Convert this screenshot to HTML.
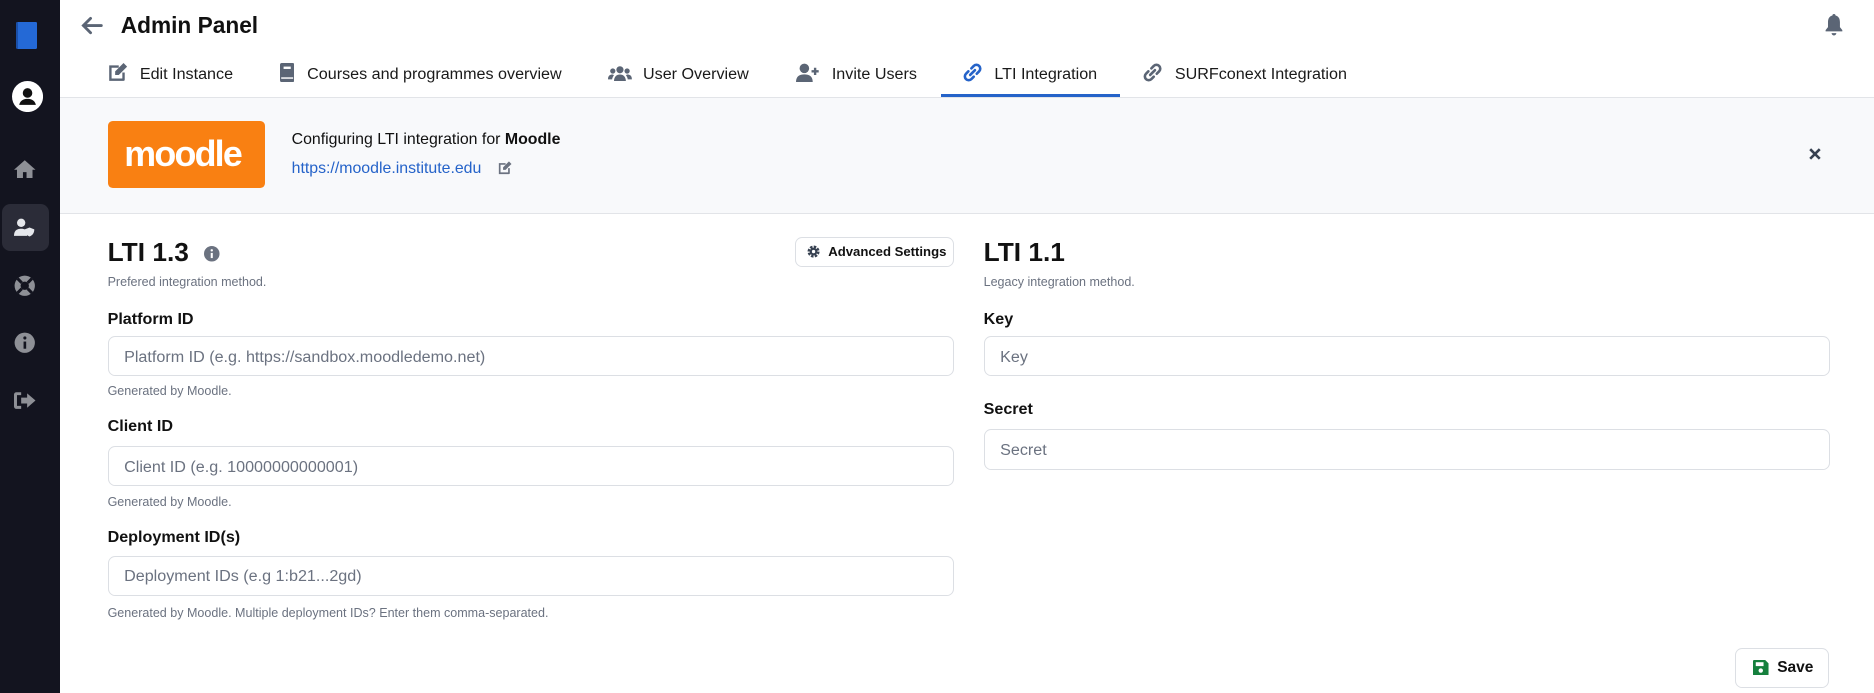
<!DOCTYPE html>
<html><head><meta charset="utf-8"><style>
html,body{margin:0;padding:0;background:#fff;overflow:hidden}
#w{position:relative;width:1568px;height:580px;zoom:1.19515;font-family:"Liberation Sans",sans-serif;color:#111}
.a{position:absolute;white-space:nowrap}
.sb{left:0;top:0;width:50px;height:580px;background:#13141f}
.ic{fill:#8e9096}
.tab{font-size:13.5px;color:#1a1a1a;top:54px}
.ti{fill:#5b6575}
.lbl{font-size:13.5px;font-weight:bold}
.inp{border:1px solid #dcdfe4;border-radius:6px;height:33px;box-sizing:border-box;font-size:13.5px;color:#6b7280;padding:9px 13px}
.help{font-size:10.5px;color:#6b7280}
h2{margin:0;font-size:22px;font-weight:bold}
</style></head><body><div id="w">
<div class="a sb"></div>
<div class="a" style="left:13px;top:18px;width:16px;height:23px;background:#2469d6;border-radius:1px;border-left:2px solid #1a4fa8"></div>
<svg class="a" style="left:10px;top:68px" width="26" height="26" viewBox="0 0 26 26"><circle cx="13" cy="13" r="13" fill="#fff"/><circle cx="13" cy="10" r="4" fill="#111"/><path d="M6 20c1-4 4-5 7-5s6 1 7 5z" fill="#111"/></svg>
<svg class="a" style="left:12px;top:133px" width="18" height="16" viewBox="0 0 18 16"><path class="ic" d="M9 1L0 9h2.5v7h5v-5h3v5h5V9H18z"/></svg>
<div class="a" style="left:2px;top:171px;width:39px;height:39px;background:#2b2c38;border-radius:7px"></div>
<svg class="a" style="left:12px;top:182px" width="18" height="16" viewBox="0 0 18 16"><circle cx="6" cy="4" r="3.5" fill="#e5e7eb"/><path d="M0 15c0-5 3-6 6-6s4 1 5 2v4z" fill="#e5e7eb"/><path d="M13 8l4 1.5c0 3-1.5 5-4 6-2.5-1-4-3-4-6z" fill="#e5e7eb"/></svg>
<svg class="a" style="left:12px;top:230px" width="18" height="18" viewBox="0 0 18 18"><circle cx="9" cy="9" r="8.5" class="ic"/><circle cx="9" cy="9" r="3.5" fill="#13141f"/><path d="M3 3l3.5 3.5M15 3l-3.5 3.5M3 15l3.5-3.5M15 15l-3.5-3.5" stroke="#13141f" stroke-width="2.5"/></svg>
<svg class="a" style="left:12px;top:278px" width="18" height="18" viewBox="0 0 18 18"><circle cx="9" cy="9" r="8.5" class="ic"/><rect x="8" y="8" width="2.2" height="6" fill="#13141f"/><circle cx="9.1" cy="5" r="1.3" fill="#13141f"/></svg>
<svg class="a" style="left:12px;top:327px" width="18" height="16" viewBox="0 0 18 16"><path class="ic" d="M6 1H2a2 2 0 0 0-2 2v10a2 2 0 0 0 2 2h4v-2.5H2.5v-9H6zM11 2l7 6-7 6v-3.5H6v-5h5z"/></svg>

<svg class="a" style="left:68px;top:13px" width="18" height="16" viewBox="0 0 18 16"><path d="M8 2L2 8l6 6M2 8h15" stroke="#5b6575" stroke-width="2.4" fill="none" stroke-linecap="round"/></svg>
<div class="a" style="left:101px;top:10px;font-size:19px;font-weight:bold">Admin Panel</div>
<svg class="a" style="left:1527px;top:12px" width="15" height="18" viewBox="0 0 15 18"><path d="M7.5 0c1 0 1.3.6 1.3 1.3C11.5 2 12.5 4 12.5 7v4l2 2.5v1H.5v-1l2-2.5V7c0-3 1-5 3.7-5.7C6.2.6 6.5 0 7.5 0zM5.5 16h4a2 2 0 0 1-4 0z" fill="#5b6575"/></svg>

<svg class="a" style="left:90px;top:53px" width="17" height="16" viewBox="0 0 17 16"><path class="ti" d="M2 2h7v2H3v9h9V8h2v6a1 1 0 0 1-1 1H1V2z"/><path class="ti" d="M13 0l3 3-7 7H6V7z"/></svg>
<div class="a tab" style="left:117px">Edit Instance</div>
<svg class="a" style="left:234px;top:53px" width="12" height="16" viewBox="0 0 12 16"><rect width="12" height="16" rx="1.5" class="ti"/><rect x="3" y="3" width="6" height="2" fill="#fff"/><rect x="1" y="12" width="10" height="1.2" fill="#fff"/></svg>
<div class="a tab" style="left:257px">Courses and programmes overview</div>
<svg class="a" style="left:509px;top:54px" width="20" height="14" viewBox="0 0 20 14"><circle cx="10" cy="4" r="3" class="ti"/><circle cx="4" cy="5" r="2.2" class="ti"/><circle cx="16" cy="5" r="2.2" class="ti"/><path class="ti" d="M5 14c0-4 2-6 5-6s5 2 5 6zM0 12c0-3 1.5-4 4-4l1 .5C4 10 3.5 11 3.5 12zM20 12c0-3-1.5-4-4-4l-1 .5c1 1.5 1.5 2.5 1.5 3.5z"/></svg>
<div class="a tab" style="left:538px">User Overview</div>
<svg class="a" style="left:666px;top:53px" width="20" height="16" viewBox="0 0 20 16"><circle cx="7" cy="4.5" r="4" class="ti"/><path class="ti" d="M0 16c0-5 3-6.5 7-6.5s7 1.5 7 6.5z"/><path d="M16 4v6M13 7h6" stroke="#5b6575" stroke-width="2"/></svg>
<div class="a tab" style="left:696px">Invite Users</div>
<svg class="a" style="left:806px;top:53px" width="16" height="16" viewBox="0 0 16 16"><path d="M7 4.5l2-2a3 3 0 0 1 4.5 4.5l-2 2M9 11.5l-2 2A3 3 0 0 1 2.5 9l2-2M6 10l4-4" stroke="#2563c9" stroke-width="2.2" fill="none" stroke-linecap="round"/></svg>
<div class="a tab" style="left:832px">LTI Integration</div>
<svg class="a" style="left:956px;top:53px" width="16" height="16" viewBox="0 0 16 16"><path d="M7 4.5l2-2a3 3 0 0 1 4.5 4.5l-2 2M9 11.5l-2 2A3 3 0 0 1 2.5 9l2-2M6 10l4-4" stroke="#5b6575" stroke-width="2.2" fill="none" stroke-linecap="round"/></svg>
<div class="a tab" style="left:983px">SURFconext Integration</div>
<div class="a" style="left:787px;top:79px;width:150px;height:2px;background:#2563c9"></div>
<div class="a" style="left:50px;top:81px;width:1518px;height:96px;background:#f8f9fb;border-top:1px solid #e2e4e8;border-bottom:1px solid #e2e4e8"></div>

<div class="a" style="left:90px;top:101px;width:132px;height:56px;background:#f98012;border-radius:4px"></div>
<div class="a" style="left:104px;top:112px;font-size:30px;font-weight:bold;color:#fff;letter-spacing:-1.5px">moodle</div>
<div class="a" style="left:244px;top:110px;font-size:13.3px">Configuring LTI integration for <b>Moodle</b></div>
<div class="a" style="left:244px;top:134px;font-size:13.3px;color:#2563c9">https://moodle.institute.edu</div>
<svg class="a" style="left:417px;top:135px" width="12" height="12" viewBox="0 0 17 16"><path d="M2 2h7v2H3v9h9V8h2v6a1 1 0 0 1-1 1H1V2z" fill="#6b7280"/><path d="M13 0l3 3-7 7H6V7z" fill="#6b7280"/></svg>
<svg class="a" style="left:1514px;top:124px" width="10" height="10" viewBox="0 0 10 10"><path d="M1 1l8 8M9 1L1 9" stroke="#374151" stroke-width="2.2"/></svg>

<div class="a" style="left:90px;top:198px"><h2>LTI 1.3</h2></div>
<svg class="a" style="left:171px;top:206px" width="13" height="13" viewBox="0 0 18 18"><circle cx="9" cy="9" r="9" fill="#6b7280"/><rect x="7.8" y="8" width="2.4" height="6" fill="#fff"/><circle cx="9" cy="5" r="1.4" fill="#fff"/></svg>
<div class="a help" style="left:90px;top:230px">Prefered integration method.</div>
<div class="a" style="left:665px;top:198px;width:133px;height:25px;box-sizing:border-box;border:1px solid #dcdfe4;border-radius:6px"></div>
<svg class="a" style="left:675px;top:205px" width="11" height="11" viewBox="0 0 12 12"><circle cx="6" cy="6" r="4.2" fill="none" stroke="#374151" stroke-width="2.6" stroke-dasharray="2.2 1.1"/><circle cx="6" cy="6" r="3.5" fill="#374151"/><circle cx="6" cy="6" r="1.5" fill="#fff"/></svg>
<div class="a" style="left:693px;top:204px;font-size:11px;font-weight:bold">Advanced Settings</div>

<div class="a lbl" style="left:90px;top:259px">Platform ID</div>
<div class="a inp" style="left:90px;top:281px;width:708px;height:34px">Platform ID (e.g. https://sandbox.moodledemo.net)</div>
<div class="a help" style="left:90px;top:321px">Generated by Moodle.</div>
<div class="a lbl" style="left:90px;top:349px">Client ID</div>
<div class="a inp" style="left:90px;top:373px;width:708px;height:34px">Client ID (e.g. 10000000000001)</div>
<div class="a help" style="left:90px;top:414px">Generated by Moodle.</div>
<div class="a lbl" style="left:90px;top:442px">Deployment ID(s)</div>
<div class="a inp" style="left:90px;top:465px;width:708px;height:34px">Deployment IDs (e.g 1:b21...2gd)</div>
<div class="a help" style="left:90px;top:507px">Generated by Moodle. Multiple deployment IDs? Enter them comma-separated.</div>

<div class="a" style="left:823px;top:198px"><h2>LTI 1.1</h2></div>
<div class="a help" style="left:823px;top:230px">Legacy integration method.</div>
<div class="a lbl" style="left:823px;top:259px">Key</div>
<div class="a inp" style="left:823px;top:281px;width:708px;height:34px">Key</div>
<div class="a lbl" style="left:823px;top:335px">Secret</div>
<div class="a inp" style="left:823px;top:359px;width:708px;height:34px">Secret</div>

<div class="a" style="left:1452px;top:542px;width:78px;height:34px;box-sizing:border-box;border:1px solid #dcdfe4;border-radius:6px"></div>
<svg class="a" style="left:1467px;top:552px" width="13" height="13" viewBox="0 0 14 14"><path d="M1 0h10l3 3v10a1 1 0 0 1-1 1H1a1 1 0 0 1-1-1V1a1 1 0 0 1 1-1z" fill="#15803d"/><rect x="2.5" y="2" width="7" height="3.5" fill="#fff"/><circle cx="7" cy="9.5" r="2" fill="#fff"/></svg>
<div class="a" style="left:1487px;top:551px;font-size:13px;font-weight:bold">Save</div>
</div></body></html>
